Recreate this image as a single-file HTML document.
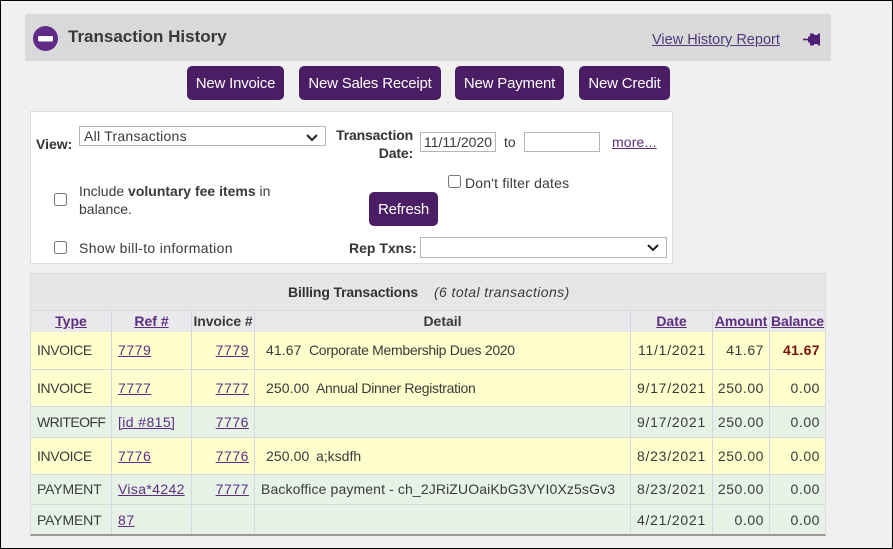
<!DOCTYPE html>
<html><head><meta charset="utf-8"><style>
html,body{margin:0;padding:0}
body{width:893px;height:549px;overflow:hidden;background:#f0f0f0;position:relative;font-family:"Liberation Sans",sans-serif;font-size:14px;color:#3a3a3a}
div,a,b,span.a{position:absolute;white-space:nowrap}
a{color:#5c2d82;text-decoration:underline}
.btn{background:#4a1d64;color:#fff;border-radius:5px;height:34px;line-height:35px;text-align:center;top:66px;font-size:15px;letter-spacing:-.2px}
.lab{font-weight:bold;color:#333}
.inp{background:#fff;border:1px solid #b5b5b5;box-sizing:border-box}
.cb{width:13px;height:13px;background:#fff;border:1px solid #767676;border-radius:2.5px;box-sizing:border-box}
.row{left:31px;width:794px}
.y{background:#ffffcd}.g{background:#e6f2e6}
.vl{width:1px;background:#d6d6e0}
.hl{left:31px;width:794px;height:1px;background:#d8d8d8}
.c{height:20px;line-height:20px}
.h{font-weight:bold;top:311px;height:20px;line-height:20px;text-align:center}
.h a{position:static;color:#5c2d82}
.r{text-align:right}
.d{letter-spacing:.75px}
.n{letter-spacing:.55px}
.cap{letter-spacing:-.4px}
.t{letter-spacing:.35px}
</style></head><body>
<div style="left:0;top:0;width:893px;height:1px;background:#000"></div>
<div style="left:0;top:0;width:1px;height:549px;background:#000"></div>
<div style="left:892px;top:0;width:1px;height:549px;background:#000"></div>
<div style="left:0;top:548px;width:893px;height:1px;background:#000"></div>

<div style="left:25px;top:14px;width:806px;height:47px;background:#d9d9d9"></div>
<svg style="position:absolute;left:33px;top:26px" width="25" height="25"><circle cx="12.5" cy="12.5" r="12.5" fill="#5f2b86"/><rect x="5" y="10" width="15" height="5.5" rx="1.5" fill="#fff"/></svg>
<div style="left:68px;top:26px;height:22px;line-height:22px;font-size:17px;font-weight:bold;color:#383838">Transaction History</div>
<a style="left:652px;top:30px;line-height:20px;font-size:14.5px;color:#4f3a7c">View History Report</a>
<svg style="position:absolute;left:802px;top:32px" width="19" height="15"><path d="M1 7.5H7" stroke="#4f1f78" stroke-width="1.6"/><path d="M6 5L8 4V1.5H11L13 3H15.5L16 1.5H18V13.5H16L15.5 12H13L11 13.5H8V11L6 10Z" fill="#4f1f78"/></svg>

<div class="btn" style="left:187px;width:97px">New Invoice</div>
<div class="btn" style="left:299px;width:142px">New Sales Receipt</div>
<div class="btn" style="left:455px;width:109px">New Payment</div>
<div class="btn" style="left:579px;width:91px">New Credit</div>

<div style="left:30px;top:111px;width:643px;height:153px;background:#fff;border:1px solid #ddd;box-sizing:border-box"></div>
<div class="lab" style="left:36px;top:134px;line-height:20px">View:</div>
<div class="inp" style="left:79px;top:126px;width:247px;height:20px;line-height:18px;padding-left:4px;letter-spacing:.25px">All Transactions</div>
<svg style="position:absolute;left:305px;top:133px" width="14" height="9"><path d="M2 2L7 7L12 2" fill="none" stroke="#222" stroke-width="2"/></svg>
<div class="lab r" style="right:480px;top:126px;line-height:18px;white-space:normal;width:90px;letter-spacing:-.15px">Transaction Date:</div>
<div class="inp" style="left:420px;top:132px;width:76px;height:20px;line-height:18px;padding-left:3px">11/11/2020</div>
<div style="left:504px;top:132px;line-height:20px">to</div>
<div class="inp" style="left:524px;top:132px;width:76px;height:20px"></div>
<a style="left:612px;top:132px;line-height:20px;letter-spacing:.15px">more...</a>
<div class="cb" style="left:448px;top:175px"></div>
<div style="left:465px;top:173px;line-height:20px;letter-spacing:.2px">Don't filter dates</div>
<div class="btn" style="left:369px;top:192px;width:69px">Refresh</div>
<div class="cb" style="left:54px;top:193px"></div>
<div style="left:79px;top:182px;line-height:18px">Include <span style="font-weight:bold">voluntary fee items</span> in<br>balance.</div>
<div class="cb" style="left:54px;top:241px"></div>
<div style="left:79px;top:238px;line-height:20px;letter-spacing:.35px">Show bill-to information</div>
<div class="lab" style="left:349px;top:238px;line-height:20px">Rep Txns:</div>
<div class="inp" style="left:420px;top:237px;width:247px;height:21px"></div>
<svg style="position:absolute;left:646px;top:243px" width="14" height="9"><path d="M2 2L7 7L12 2" fill="none" stroke="#222" stroke-width="2"/></svg>

<div style="left:30px;top:273px;width:796px;height:263px;background:#e6e6e6;border:1px solid #dcdcdc;border-bottom:2px solid #999;box-sizing:border-box"></div>
<div style="left:31px;top:310px;width:794px;height:1px;background:#dadada"></div>
<div style="left:31px;top:311px;width:794px;height:20px;background:#e9e9ec"></div>
<div class="lab" style="left:288px;top:282px;line-height:20px;letter-spacing:-.15px">Billing Transactions</div>
<div style="left:434px;top:282px;line-height:20px;font-style:italic;letter-spacing:.4px">(6 total transactions)</div>

<div class="row y" style="top:332px;height:37px"></div>
<div class="row y" style="top:370px;height:36px"></div>
<div class="row g" style="top:407px;height:30px"></div>
<div class="row y" style="top:438px;height:36px"></div>
<div class="row g" style="top:475px;height:29px"></div>
<div class="row g" style="top:505px;height:29px"></div>
<div class="hl" style="top:369px"></div><div class="hl" style="top:406px"></div><div class="hl" style="top:437px"></div><div class="hl" style="top:474px"></div><div class="hl" style="top:504px"></div>
<div class="vl" style="left:111px;top:311px;height:223px"></div>
<div class="vl" style="left:191px;top:311px;height:223px"></div>
<div class="vl" style="left:254px;top:311px;height:223px"></div>
<div class="vl" style="left:630px;top:311px;height:223px"></div>
<div class="vl" style="left:712px;top:311px;height:223px"></div>
<div class="vl" style="left:769px;top:311px;height:223px"></div>

<div class="h" style="left:31px;width:80px"><a>Type</a></div>
<div class="h" style="left:112px;width:79px"><a>Ref #</a></div>
<div class="h" style="left:192px;width:62px;letter-spacing:-.1px">Invoice #</div>
<div class="h" style="left:255px;width:375px">Detail</div>
<div class="h" style="left:631px;width:81px"><a>Date</a></div>
<div class="h" style="left:713px;width:56px;letter-spacing:-.1px"><a>Amount</a></div>
<div class="h" style="left:770px;width:55px;letter-spacing:-.1px"><a>Balance</a></div>

<div class="c cap" style="left:37px;top:340px">INVOICE</div><a class="c n" style="left:118px;top:340px">7779</a><a class="c n" style="right:644px;top:340px">7779</a>
<div class="c" style="left:266px;top:340px;letter-spacing:.1px">41.67</div><div class="c" style="left:309px;top:340px;letter-spacing:-.3px">Corporate Membership Dues 2020</div>
<div class="c r d" style="right:187px;top:340px">11/1/2021</div><div class="c r n" style="right:129px;top:340px">41.67</div><div class="c r" style="right:73px;top:340px;font-weight:bold;color:#7a0c0c;letter-spacing:.4px">41.67</div>

<div class="c cap" style="left:37px;top:378px">INVOICE</div><a class="c n" style="left:118px;top:378px">7777</a><a class="c n" style="right:644px;top:378px">7777</a>
<div class="c" style="left:266px;top:378px;letter-spacing:.1px">250.00</div><div class="c" style="left:316px;top:378px;letter-spacing:-.3px">Annual Dinner Registration</div>
<div class="c r d" style="right:187px;top:378px">9/17/2021</div><div class="c r n" style="right:129px;top:378px">250.00</div><div class="c r n" style="right:73px;top:378px">0.00</div>

<div class="c" style="left:37px;top:412px;letter-spacing:-.6px">WRITEOFF</div><a class="c" style="left:118px;top:412px;letter-spacing:.4px">[id #815]</a><a class="c n" style="right:644px;top:412px">7776</a>
<div class="c r d" style="right:187px;top:412px">9/17/2021</div><div class="c r n" style="right:129px;top:412px">250.00</div><div class="c r n" style="right:73px;top:412px">0.00</div>

<div class="c cap" style="left:37px;top:446px">INVOICE</div><a class="c n" style="left:118px;top:446px">7776</a><a class="c n" style="right:644px;top:446px">7776</a>
<div class="c" style="left:266px;top:446px;letter-spacing:.1px">250.00</div><div class="c" style="left:316px;top:446px">a;ksdfh</div>
<div class="c r d" style="right:187px;top:446px">8/23/2021</div><div class="c r n" style="right:129px;top:446px">250.00</div><div class="c r n" style="right:73px;top:446px">0.00</div>

<div class="c" style="left:37px;top:479px;letter-spacing:-.15px">PAYMENT</div><a class="c" style="left:118px;top:479px;letter-spacing:.35px">Visa*4242</a><a class="c n" style="right:644px;top:479px">7777</a>
<div class="c" style="left:261px;top:479px;letter-spacing:.12px">Backoffice payment - ch_2JRiZUOaiKbG3VYI0Xz5sGv3</div>
<div class="c r d" style="right:187px;top:479px">8/23/2021</div><div class="c r n" style="right:129px;top:479px">250.00</div><div class="c r n" style="right:73px;top:479px">0.00</div>

<div class="c" style="left:37px;top:510px;letter-spacing:-.15px">PAYMENT</div><a class="c n" style="left:118px;top:510px">87</a>
<div class="c r d" style="right:187px;top:510px">4/21/2021</div><div class="c r n" style="right:129px;top:510px">0.00</div><div class="c r n" style="right:73px;top:510px">0.00</div>
</body></html>
